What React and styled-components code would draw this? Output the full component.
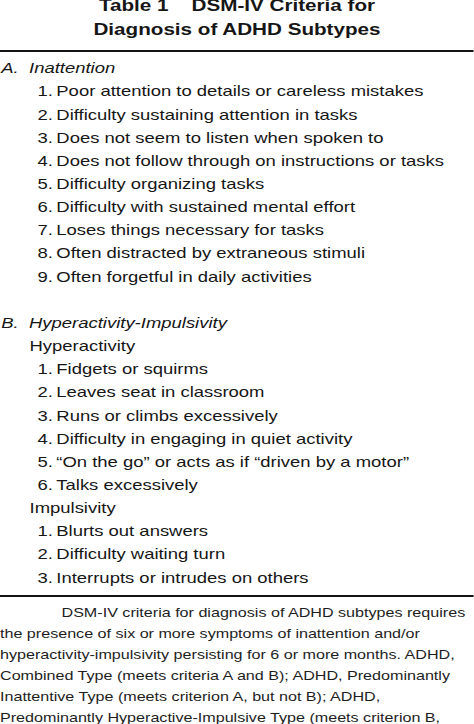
import React from "react";
import styled, { createGlobalStyle } from "styled-components";

const GlobalStyle = createGlobalStyle`
  html, body {
    margin: 0;
    padding: 0;
    background: #ffffff;
    overflow: hidden;
  }
`;

const STRETCH = 1.23;

const Page = styled.div`
  width: ${474 / STRETCH}px;
  transform: scaleX(${STRETCH});
  transform-origin: 0 0;
  font-family: "Liberation Sans", Arial, Helvetica, sans-serif;
  color: #161616;
`;

const Title = styled.h1`
  margin: -6px 0 0;
  font-size: 16.8px;
  font-weight: 700;
  line-height: 24px;
  text-align: center;
`;

const TableNo = styled.span`
  margin-right: 14px;
`;

const Rule = styled.div`
  height: 2px;
  background: #141414;
  margin-top: ${(p) => p.$top}px;
`;

const Body = styled.div`
  margin-top: 4.2px;
  font-size: 15px;
  line-height: 23.15px;
`;

const Section = styled.div`
  & + & {
    margin-top: 23.15px;
  }
`;

const Heading = styled.div`
  display: grid;
  grid-template-columns: 22.6px 1fr;
  padding-left: 1px;
  font-style: italic;
  white-space: nowrap;
`;

const SubHead = styled.div`
  padding-left: 24px;
  white-space: nowrap;
`;

const Item = styled.div`
  display: grid;
  grid-template-columns: 15.4px 1fr;
  padding-left: 30.4px;
  white-space: nowrap;
`;

const Note = styled.p`
  margin: 5px 0 0;
  font-size: 13.1px;
  line-height: 21px;
  text-indent: 50px;
  white-space: nowrap;
  color: #1e1e1e;
`;

const inattention = [
  "Poor attention to details or careless mistakes",
  "Difficulty sustaining attention in tasks",
  "Does not seem to listen when spoken to",
  "Does not follow through on instructions or tasks",
  "Difficulty organizing tasks",
  "Difficulty with sustained mental effort",
  "Loses things necessary for tasks",
  "Often distracted by extraneous stimuli",
  "Often forgetful in daily activities",
];

const hyperactivity = [
  "Fidgets or squirms",
  "Leaves seat in classroom",
  "Runs or climbs excessively",
  "Difficulty in engaging in quiet activity",
  "\u201COn the go\u201D or acts as if \u201Cdriven by a motor\u201D",
  "Talks excessively",
];

const impulsivity = [
  "Blurts out answers",
  "Difficulty waiting turn",
  "Interrupts or intrudes on others",
];

const noteLines = [
  "DSM-IV criteria for diagnosis of ADHD subtypes requires",
  "the presence of six or more symptoms of inattention and/or",
  "hyperactivity-impulsivity persisting for 6 or more months. ADHD,",
  "Combined Type (meets criteria A and B); ADHD, Predominantly",
  "Inattentive Type (meets criterion A, but not B); ADHD,",
  "Predominantly Hyperactive-Impulsive Type (meets criterion B,",
];

function List({ items }) {
  return items.map((text, i) => (
    <Item key={i}>
      <span>{i + 1}.</span>
      <span>{text}</span>
    </Item>
  ));
}

export default function App() {
  return (
    <>
      <GlobalStyle />
      <Page>
        <Title>
          <TableNo>Table 1</TableNo> DSM-IV Criteria for
          <br />
          Diagnosis of ADHD Subtypes
        </Title>
        <Rule $top={8} />
        <Body>
          <Section>
            <Heading>
              <span>A.</span>
              <span>Inattention</span>
            </Heading>
            <List items={inattention} />
          </Section>
          <Section>
            <Heading>
              <span>B.</span>
              <span>Hyperactivity-Impulsivity</span>
            </Heading>
            <SubHead>Hyperactivity</SubHead>
            <List items={hyperactivity} />
            <SubHead>Impulsivity</SubHead>
            <List items={impulsivity} />
          </Section>
        </Body>
        <Rule $top={6.4} />
        <Note>
          {noteLines.map((line, i) => (
            <React.Fragment key={i}>
              {i > 0 && <br />}
              {line}
            </React.Fragment>
          ))}
        </Note>
      </Page>
    </>
  );
}
